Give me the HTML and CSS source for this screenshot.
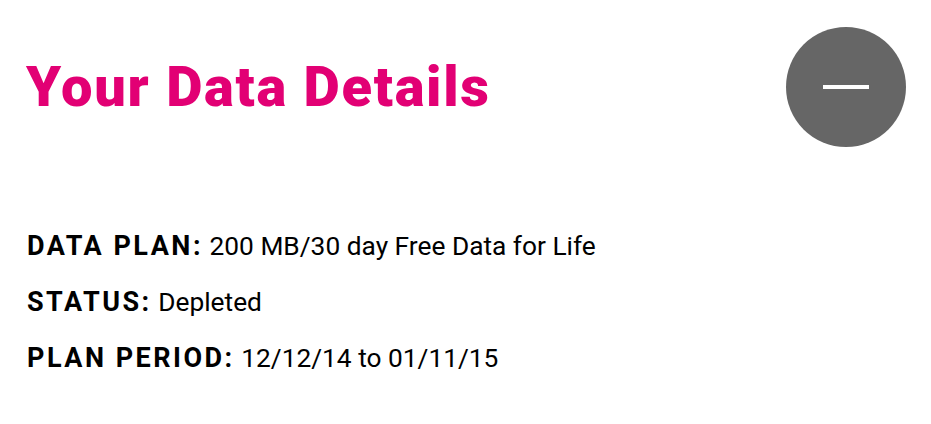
FILE: index.html
```html
<!doctype html>
<html lang="en">
  <head>
    <meta charset="UTF-8" />
    <meta name="viewport" content="width=device-width, initial-scale=1.0" />
    <title>Your Data Details</title>
    <link rel="stylesheet" href="styles.css">
  </head>
  <body>
    <main class="data-details">
      <header class="details-header">
        <h1 class="details-title">Your Data Details</h1>
        <button class="collapse-btn" aria-label="Collapse">
          <span class="collapse-bar"></span>
        </button>
      </header>

      <ul class="details-list">
        <li><span class="label">DATA PLAN:</span> 200 MB/30 day Free Data for Life</li>
        <li><span class="label">STATUS:</span> Depleted</li>
        <li><span class="label">PLAN PERIOD:</span> 12/12/14 to 01/11/15</li>
      </ul>
    </main>
  </body>
</html>
```

FILE: styles.css
```css
/* Reset and general styles */
* {
  margin: 0;
  padding: 0;
  box-sizing: border-box;
}

body {
  background-color: #ffffff;
  color: #000000;
  font-family: "Roboto", "Liberation Sans", sans-serif;
}

.data-details {
  padding: 27px 25px 0 26px;
}

/* Header: title and collapse button */
.details-header {
  display: flex;
  align-items: center;
  justify-content: space-between;
}

.details-title {
  font-family: "Roboto", "Liberation Sans", sans-serif;
  font-weight: 900;
  font-size: 56px;
  line-height: 56px;
  letter-spacing: 1.7px;
  color: #e20074;
}

.collapse-btn {
  width: 120px;
  height: 120px;
  border: none;
  border-radius: 50%;
  background-color: #666666;
  display: flex;
  align-items: center;
  justify-content: center;
  cursor: pointer;
}

.collapse-bar {
  display: block;
  width: 46px;
  height: 4px;
  background-color: #ffffff;
}

/* Plan details */
.details-list {
  list-style: none;
  margin-top: 71px;
  padding-left: 1px;
}

.details-list li {
  font-size: 26.3px;
  line-height: 56px;
}

.label {
  font-weight: bold;
  font-size: 27px;
  letter-spacing: 2.5px;
}
```
